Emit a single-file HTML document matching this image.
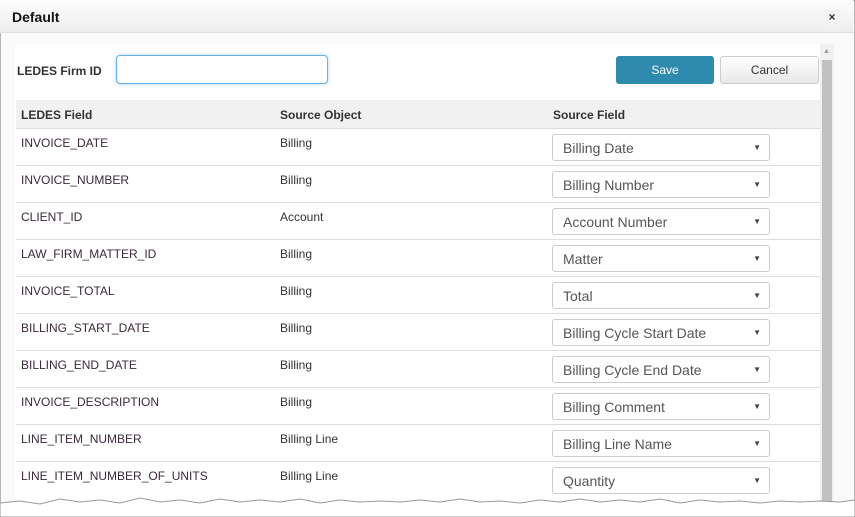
<!DOCTYPE html>
<html style="width:855px;height:517px;overflow:hidden"><head><style>
*{box-sizing:border-box;margin:0;padding:0}
body{width:855px;height:517px;overflow:hidden;background:#fff;font-family:"Liberation Sans",Arial,sans-serif;position:relative}
.dlg{position:absolute;left:0;top:0;width:855px;height:517px;border:1px solid #b5b5b5;border-bottom:none;background:#fafafa}
.hdr{position:absolute;left:0;top:0;width:853px;height:33px;background:linear-gradient(#fdfdfd,#eeeeee);border-bottom:1px solid #ddd}
.hdr b{position:absolute;left:12px;top:9px;font-size:14px;color:#111}
.x{position:absolute;left:824px;top:9px;width:16px;height:16px;background:#f3f3f3;font-size:12px;font-weight:bold;text-align:center;line-height:16px;color:#333}
.body{position:absolute;left:15px;top:44px;width:805px;height:473px;background:#fff}
.sb{position:absolute;left:820px;top:44px;width:14px;height:473px;background:#f0f0f0}
.thumb{position:absolute;left:822px;top:60px;width:10px;height:457px;background:#c1c1c1}
.arr{position:absolute;left:823px;top:48px;font-size:7px;color:#999}
.lbl{position:absolute;left:17px;top:64px;font-size:12px;font-weight:bold;color:#333}
.inp{position:absolute;left:116px;top:55px;width:212px;height:29px;border:1px solid #66afe9;border-radius:4px;box-shadow:0 0 4px rgba(102,175,233,.5)}
.save{position:absolute;left:616px;top:56px;width:98px;height:28px;background:#2e8bad;border-radius:3px;color:#fff;font-size:12px;text-align:center;line-height:28px}
.cancel{position:absolute;left:720px;top:56px;width:99px;height:28px;background:linear-gradient(#fff,#e8e8e8);border:1px solid #ccc;border-radius:3px;color:#333;font-size:12px;text-align:center;line-height:26px}
.th{position:absolute;left:16px;top:100px;width:804px;height:29px;background:#f1f1f1;border-bottom:1px solid #ddd}
.th span,.row span{position:absolute;font-size:12px;color:#333}
.th span{font-weight:bold;top:8px}
.row{position:absolute;left:16px;width:804px;height:37px;border-bottom:1px solid #ddd}
.row span{top:7px}
.row .c1{left:5px;color:#3a2a3a}
.sel{position:absolute;left:536px;top:5px;width:218px;height:27px;border:1px solid #ccc;border-radius:3px;font-size:14px;color:#555;padding:5px 0 0 10px}
.sel:after{content:"▼";position:absolute;right:8px;top:8px;font-size:8px;color:#444}
</style></head><body>
<div class="dlg"></div>
<div class="hdr"><b>Default</b><div class="x">×</div></div>
<div class="body"></div>
<div class="sb"></div><div class="thumb"></div><div class="arr">▲</div>
<div class="lbl">LEDES Firm ID</div>
<div class="inp"></div>
<div class="save">Save</div>
<div class="cancel">Cancel</div>
<div class="th"><span style="left:5px">LEDES Field</span><span style="left:264px">Source Object</span><span style="left:537px">Source Field</span></div>
<div class="row" style="top:129px"><span class="c1">INVOICE_DATE</span><span style="left:264px">Billing</span><div class="sel">Billing Date</div></div>
<div class="row" style="top:166px"><span class="c1">INVOICE_NUMBER</span><span style="left:264px">Billing</span><div class="sel">Billing Number</div></div>
<div class="row" style="top:203px"><span class="c1">CLIENT_ID</span><span style="left:264px">Account</span><div class="sel">Account Number</div></div>
<div class="row" style="top:240px"><span class="c1">LAW_FIRM_MATTER_ID</span><span style="left:264px">Billing</span><div class="sel">Matter</div></div>
<div class="row" style="top:277px"><span class="c1">INVOICE_TOTAL</span><span style="left:264px">Billing</span><div class="sel">Total</div></div>
<div class="row" style="top:314px"><span class="c1">BILLING_START_DATE</span><span style="left:264px">Billing</span><div class="sel">Billing Cycle Start Date</div></div>
<div class="row" style="top:351px"><span class="c1">BILLING_END_DATE</span><span style="left:264px">Billing</span><div class="sel">Billing Cycle End Date</div></div>
<div class="row" style="top:388px"><span class="c1">INVOICE_DESCRIPTION</span><span style="left:264px">Billing</span><div class="sel">Billing Comment</div></div>
<div class="row" style="top:425px"><span class="c1">LINE_ITEM_NUMBER</span><span style="left:264px">Billing Line</span><div class="sel">Billing Line Name</div></div>
<div class="row" style="top:462px;height:35px;border-bottom:none"><span class="c1">LINE_ITEM_NUMBER_OF_UNITS</span><span style="left:264px">Billing Line</span><div class="sel">Quantity</div></div>
<svg style="position:absolute;left:0;top:490px" width="855" height="27"><polygon fill="#fff" stroke="#999" stroke-width="1" points="0,13 20,11 40,14 60,9 80,12 100,10 120,13 140,8 160,12 180,10 200,13 220,9 240,12 260,10 280,12 300,9 320,13 340,10 360,12 380,11 400,12 420,10 440,12 460,9 480,12 500,11 520,13 540,10 560,12 580,9 600,12 620,10 640,12 660,9 680,13 700,10 720,12 740,11 760,13 780,11 800,12 820,11 840,12 855,10 855,27 0,27"/></svg>
</body></html>
